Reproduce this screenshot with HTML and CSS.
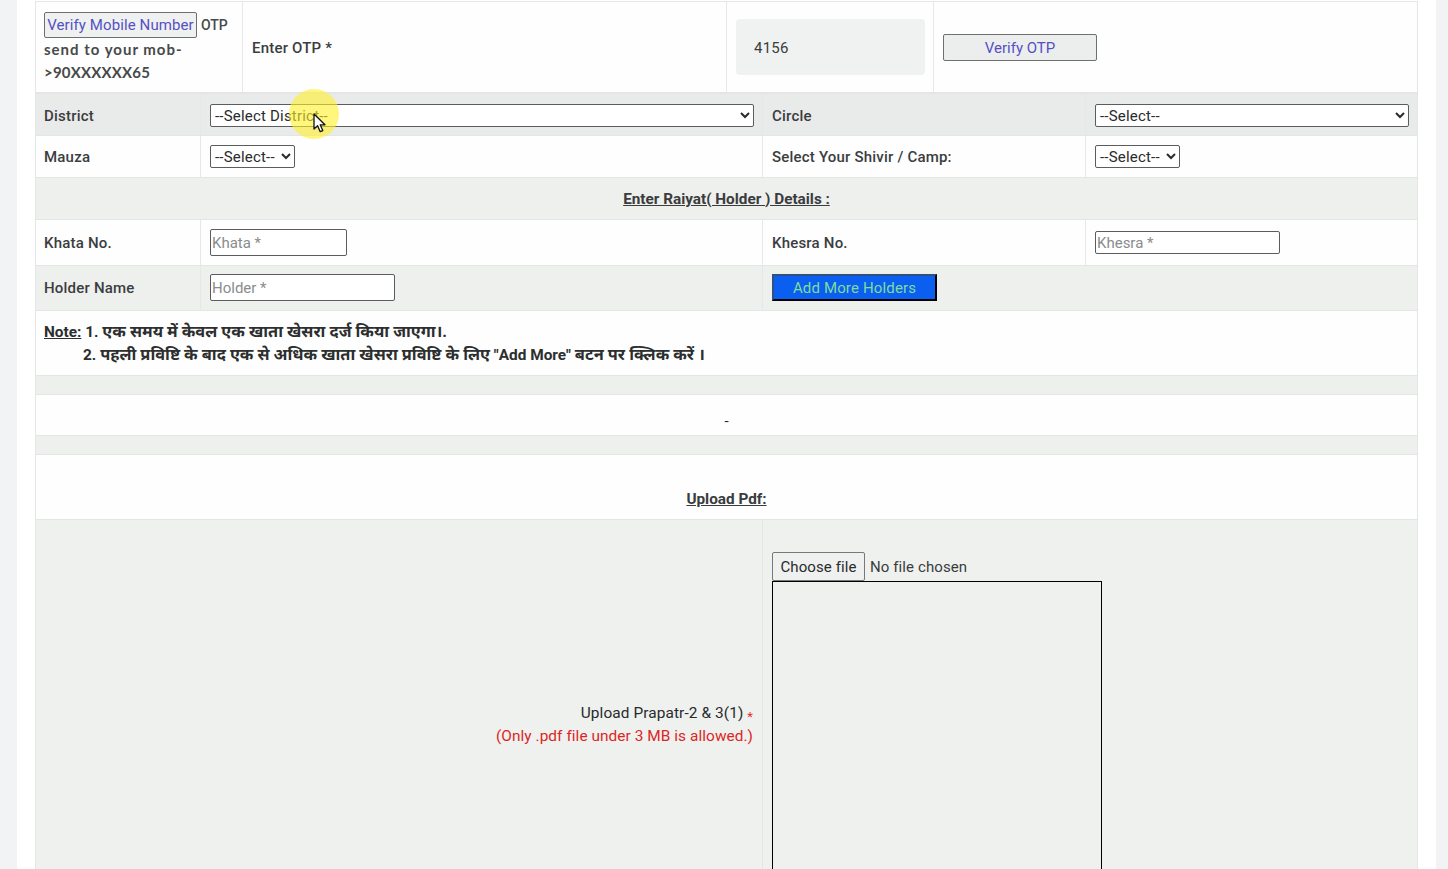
FILE: index.html
```html
<!DOCTYPE html>
<html lang="en">
<head>
<meta charset="utf-8">
<title>Upload form</title>
<link rel="stylesheet" href="styles.css">
</head>
<body>
<main class="panel">
  <div class="form">
    <div class="row row-otp">
      <div class="cell otp-msg">
        <div class="otp-first"><button class="btn-verify-mobile" type="button">Verify Mobile Number</button><span class="otp-word">OTP</span></div>
        <div class="otp-line">send to your mob-</div>
        <div class="otp-line otp-num">&gt;90XXXXXX65</div>
      </div>
      <div class="cell label label-lower">Enter OTP *</div>
      <div class="cell otp-input-cell"><input class="otp-input" type="text" value="4156"></div>
      <div class="cell"><button class="btn-verify-otp" type="button">Verify OTP</button></div>
    </div>
    <div class="row row-four row-district alt">
      <div class="cell label label-first">District</div>
      <div class="cell"><select class="sel sel-full"><option>--Select District--</option></select></div>
      <div class="cell label">Circle</div>
      <div class="cell"><select class="sel sel-full"><option>--Select--</option></select></div>
    </div>
    <div class="row row-four row-mauza">
      <div class="cell label label-first">Mauza</div>
      <div class="cell"><select class="sel sel-short"><option>--Select--</option></select></div>
      <div class="cell label">Select Your Shivir / Camp:</div>
      <div class="cell"><select class="sel sel-short"><option>--Select--</option></select></div>
    </div>
    <div class="row row-title alt"><span class="title">Enter Raiyat( Holder ) Details :</span></div>
    <div class="row row-four row-khata">
      <div class="cell label label-first">Khata No.</div>
      <div class="cell"><input class="txt txt-khata" type="text" placeholder="Khata *"></div>
      <div class="cell label">Khesra No.</div>
      <div class="cell"><input class="txt txt-khesra" type="text" placeholder="Khesra *"></div>
    </div>
    <div class="row row-holder alt">
      <div class="cell label label-first">Holder Name</div>
      <div class="cell cell-raised"><input class="txt txt-holder" type="text" placeholder="Holder *"></div>
      <div class="cell cell-raised"><button class="btn-add" type="button">Add More Holders</button></div>
    </div>
    <div class="row row-note">
      <p class="note-line"><u>Note:</u> 1. <span class="hi">एक समय में केवल एक खाता खेसरा दर्ज किया जाएगा।.</span></p>
      <p class="note-line note-second">2. <span class="hi">पहली प्रविष्टि के बाद एक से अधिक खाता खेसरा प्रविष्टि के लिए</span> "Add More" <span class="hi">बटन पर क्लिक करें ।</span></p>
    </div>
    <div class="row row-spacer alt"></div>
    <div class="row row-dash">-</div>
    <div class="row row-spacer alt"></div>
    <div class="row row-upload-title"><span class="title">Upload Pdf:</span></div>
    <div class="row row-upload alt">
      <div class="upload-label">
        <div>Upload Prapatr-2 &amp; 3(1) <span class="star">*</span></div>
        <div class="warn">(Only .pdf file under 3 MB is allowed.)</div>
      </div>
      <div class="upload-field">
        <div class="file">
          <button class="file-btn" type="button">Choose file</button>
          <span class="file-name">No file chosen</span>
        </div>
        <div class="preview"></div>
      </div>
    </div>
  </div>
</main>
<div class="cursor-spot" aria-hidden="true"></div>
<svg class="cursor" viewBox="0 0 14 20" width="14" height="20" aria-hidden="true"><path d="M1 1v15l3.6-3.3 2.6 6 2.6-1.1-2.6-5.8H12z" fill="#fff" stroke="#111" stroke-width="1.3" stroke-linejoin="round"/></svg>
</body>
</html>
```
FILE: styles.css
```css
* { box-sizing: border-box; }
html, body { height: 869px; overflow: hidden; }
body {
  margin: 0;
  background: #f2f3f5;
  font-family: Roboto, "Noto Sans", "Liberation Sans", sans-serif;
  font-size: 15px;
  color: #292b2c;
  position: relative;
}
.panel {
  margin-left: 17px;
  width: 1419px;
  height: 869px;
  background: #fff;
  padding: 1px 18px 0;
  overflow: hidden;
}
.form {
  border-left: 1px solid #e4e7e6;
  border-right: 1px solid #e4e7e6;
  border-top: 1px solid #e4e7e6;
  width: 1383px;
  background: #fdfefd;
}
.row { border-bottom: 1px solid #e3e6e5; }
.alt { background: #eef0ee; }
.row-otp, .row-four, .row-holder { display: grid; }
.row-otp { grid-template-columns: 207px 484px 207px 1fr; height: 92px; border-bottom: 2px solid #e3e6e5; }
.row-four { grid-template-columns: 165px 562px 323px 1fr; }
.row-holder { grid-template-columns: 165px 562px 1fr; height: 45px; }
.cell {
  display: flex;
  align-items: center;
  padding: 0 8px 0 9px;
  border-right: 1px solid #e6e8e7;
  min-width: 0;
}
.cell:last-child { border-right: 0; }
.cell-raised { padding-bottom: 1px; }
.label { font-weight: 500; letter-spacing: .2px; color: #3b3d3f; }
.label-first { padding-left: 8px; }
.label-lower { padding-top: 2px; }
.otp-msg {
  display: block;
  padding: 10px 0 0 8px;
  font-family: Lato, Roboto, sans-serif;
  font-weight: 700;
  line-height: 23px;
  letter-spacing: 1px;
  color: #47494a;
}
.otp-first { display: flex; align-items: center; gap: 4px; height: 26px; }
.otp-line { height: 23px; }
.otp-word { font-family: Roboto, sans-serif; font-weight: 500; letter-spacing: 0; font-size: 14px; }
.otp-num { letter-spacing: .2px; }
.btn-verify-mobile {
  font: 400 15px Roboto, sans-serif;
  color: #5550c4;
  background: #eff0f0;
  border: 1px solid #6d6f70;
  border-radius: 2px;
  width: 153px;
  height: 26px;
  padding: 0;
  letter-spacing: .1px;
}
.otp-input-cell { padding-left: 9px; }
.otp-input {
  width: 189px;
  height: 56px;
  border: 0;
  border-radius: 4px;
  background: #f0f2f2;
  padding: 2px 18px 0;
  font: 400 15px Roboto, sans-serif;
  color: #3a3c3d;
  letter-spacing: .2px;
}
.btn-verify-otp {
  width: 154px;
  height: 27px;
  background: #eceeee;
  border: 1px solid #6d6f70;
  border-radius: 2px;
  padding: 1px 0 0;
  color: #5550c4;
  font: 400 15px Roboto, sans-serif;
}
.row-district, .row-mauza { height: 42px; }
.row-district { background: #e9ebea; }
.row-district .cell { padding-top: 2px; }
.sel {
  height: 23px;
  font: 400 15px Roboto, sans-serif;
  letter-spacing: .2px;
  color: #292b2c;
  background: #fff;
  border: 1px solid #5a5c5d;
  border-radius: 2px;
  padding: 0;
}
.sel-full { width: 100%; }
.sel-short { width: 85px; }
.row-title { height: 42px; display: flex; align-items: center; justify-content: center; }
.title { font-weight: 700; font-size: 15.3px; text-decoration: underline; color: #3a3c3d; }
.row-khata { height: 46px; }
.txt {
  height: 27px;
  border: 1px solid #5a5c5d;
  border-radius: 2px;
  background: #fff;
  padding: 0 1px;
  font: 400 15px Roboto, sans-serif;
}
.txt::placeholder { color: #8a8c8d; opacity: 1; }
.txt-khata { width: 137px; }
.txt-khesra { width: 185px; height: 23px; }
.txt-holder { width: 185px; }
.btn-add {
  width: 165px;
  height: 27px;
  background: #0a5ff0;
  border: 2px solid;
  border-color: #30507f #000 #000 #30507f;
  color: #7fdc9a;
  font: 400 15px Roboto, sans-serif;
  letter-spacing: .15px;
  padding: 0;
}
.row-note { height: 65px; padding: 9px 8px 0; font-weight: 700; font-size: 15.4px; color: #2c2e2f; }
.hi { font-size: 16.35px; }
.note-line { margin: 0; line-height: 23px; height: 23px; }
.note-second { padding-left: 39px; }
.row-spacer { height: 19px; }
.row-dash { height: 41px; text-align: center; padding-top: 16px; line-height: 20px; }
.row-upload-title { height: 65px; display: flex; align-items: flex-end; justify-content: center; padding-bottom: 11px; }
.row-upload { display: grid; grid-template-columns: 727px 1fr; height: 400px; border-bottom: 0; background: #eef1ee; }
.upload-label {
  border-right: 1px solid #e3e6e5;
  padding: 182px 9px 0 0;
  text-align: right;
  line-height: 23px;
  font-size: 15.4px;
  font-weight: 400;
  letter-spacing: .1px;
}
.star { color: #e03030; font-size: 13px; position: relative; top: 3px; }
.warn { color: #dc2626; letter-spacing: .06px; }
.upload-field { padding: 32px 0 0 9px; }
.file { display: flex; align-items: center; gap: 5px; height: 29px; color: #3a3c3d; letter-spacing: .1px; }
.file-btn {
  height: 29px;
  width: 93px;
  font: 400 15px Roboto, sans-serif;
  letter-spacing: .1px;
  color: #292b2c;
  background: #eff0f0;
  border: 1px solid #76787a;
  border-radius: 2px;
  padding: 0;
}
.preview { width: 330px; height: 320px; border: 1px solid #000; }
.cursor-spot {
  position: absolute;
  left: 289px;
  top: 89px;
  width: 50px;
  height: 50px;
  border-radius: 50%;
  background: rgba(255, 240, 40, .6);
}
.cursor { position: absolute; left: 313px; top: 113px; }
```
